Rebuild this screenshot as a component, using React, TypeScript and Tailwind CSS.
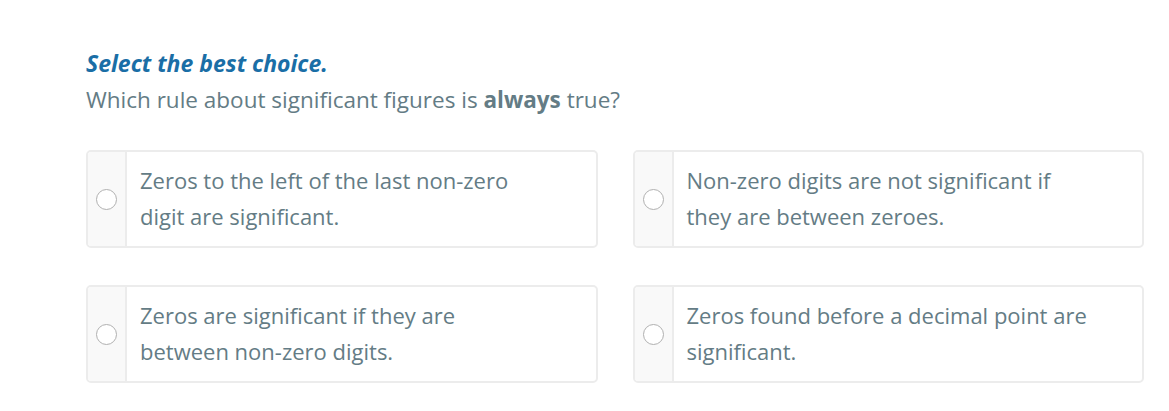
import React from "react";

const choices = [
  ["Zeros to the left of the last non-zero", "digit are significant."],
  ["Non-zero digits are not significant if", "they are between zeroes."],
  ["Zeros are significant if they are", "between non-zero digits."],
  ["Zeros found before a decimal point are", "significant."],
];

function Choice({ lines }: { lines: string[] }) {
  return (
    <div className="flex h-[98px] rounded-[5px] border-2 border-[#ececec] bg-white overflow-hidden">
      <div className="w-[39px] shrink-0 flex items-center justify-center bg-[#f9f9f9] border-r-2 border-[#ececec]">
        <div className="w-[21px] h-[21px] rounded-full border border-[#b0b0b0] bg-white" />
      </div>
      <div className="flex flex-col justify-center pl-[13px] pb-[3px] text-[22px] leading-[36px] text-[#647c85]">
        {lines.map((l, i) => (
          <div key={i}>{l}</div>
        ))}
      </div>
    </div>
  );
}

export default function App() {
  return (
    <div
      className="w-[1169px] h-[411px] bg-white pl-[86px] pr-[25px] pt-[48px]"
      style={{ fontFamily: '"Open Sans", "Noto Sans", sans-serif' }}
    >
      <div className="text-[23px] leading-[30px] font-bold italic text-[#1a6ea6]">
        Select the best choice.
      </div>
      <div className="mt-[6px] text-[22.5px] leading-[32px] text-[#647c85]">
        Which rule about significant figures is <b className="font-bold">always</b> true?
      </div>
      <div className="mt-[34px] grid grid-cols-2 gap-x-[35px] gap-y-[37px] w-[1058px]">
        {choices.map((c, i) => (
          <Choice key={i} lines={c} />
        ))}
      </div>
    </div>
  );
}
